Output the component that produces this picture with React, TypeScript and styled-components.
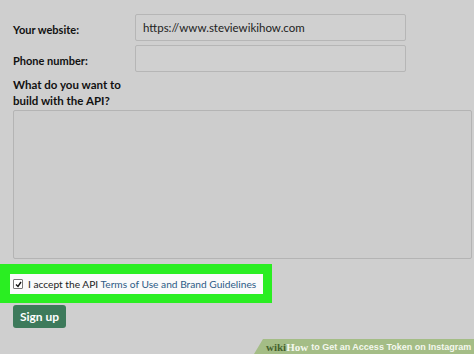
import React from 'react';
import styled, {createGlobalStyle} from "styled-components";

const GlobalStyle = createGlobalStyle`
    html, body {
        margin: 0;
        padding: 0;
        background: #cfcfcf;
        font-family: Lato, "Open Sans", sans-serif;
    }
`

const Page = styled.div`
    position: relative;
    width: 474px;
    height: 354px;
    overflow: hidden;
    background: #cfcfcf;
    padding-top: 14px;
    box-sizing: border-box;
`
const FieldRow = styled.div`
    display: grid;
    grid-template-columns: 122px 271px;
    align-items: center;
    padding-left: 13px;
    margin-bottom: 4px;
`
const Label = styled.label`
    font-size: 11px;
    font-weight: 700;
    color: #111;
    padding-top: 4px;
`
const Input = styled.div`
    height: 27px;
    box-sizing: border-box;
    border: 1.5px solid #b6b6b6;
    border-radius: 2px;
    background: #d0d0d0;
    font-size: 11.5px;
    color: #222;
    padding: 0 7px;
    display: flex;
    align-items: center;
`
const Question = styled.div`
    font-size: 11.5px;
    font-weight: 700;
    line-height: 16px;
    color: #111;
    padding: 1px 0 0 13px;
    width: 110px;
`
const TextArea = styled.div`
    margin: 1px 2px 0 13px;
    height: 149px;
    box-sizing: border-box;
    border: 1.5px solid #b4b4b4;
    border-radius: 2px;
    background: #cdcdcd;
`
const Highlight = styled.div`
    margin-top: 5px;
    width: 272px;
    box-sizing: border-box;
    background: #2aee22;
    padding: 10px 9px 9px 10px;
`
const AcceptBox = styled.div`
    background: #fafafa;
    height: 20px;
    display: flex;
    align-items: center;
    gap: 5px;
    padding-left: 3px;
    font-size: 10.2px;
    color: #222;
    white-space: nowrap;
`
const Check = styled.span`
    width: 8px;
    height: 8px;
    flex: none;
    border: 1px solid #777;
    border-radius: 1px;
    background: #fff;
    display: flex;
    align-items: center;
    justify-content: center;
`
const Link = styled.span`
    color: #2d5b86;
`
const Button = styled.div`
    margin: 2px 0 0 13px;
    width: 53px;
    height: 23px;
    border-radius: 3px;
    background: #3d7a5b;
    color: #fff;
    font-size: 12px;
    font-weight: 700;
    display: flex;
    align-items: center;
    justify-content: center;
`
const Watermark = styled.div`
    position: absolute;
    right: 0;
    bottom: 0;
    height: 15px;
    width: 220px;
    background: #a4bd86;
    clip-path: polygon(9px 0, 100% 0, 100% 100%, 0 100%);
    display: flex;
    align-items: center;
    padding-left: 12px;
    box-sizing: border-box;
    white-space: nowrap;
`
const Wiki = styled.span`
    font-family: "Liberation Serif", serif;
    font-weight: 700;
    font-size: 11px;
    color: #46622d;
`
const How = styled.span`
    font-family: "Liberation Serif", serif;
    font-weight: 700;
    font-size: 11px;
    color: #f4f8ee;
`
const Caption = styled.span`
    font-family: "Liberation Sans", sans-serif;
    font-weight: 700;
    font-size: 9px;
    color: #f4f8ee;
    margin-left: 3px;
`

export default function App() {
    return (
        <Page>
            <GlobalStyle/>
            <FieldRow>
                <Label>Your website:</Label>
                <Input>https://www.steviewikihow.com</Input>
            </FieldRow>
            <FieldRow>
                <Label>Phone number:</Label>
                <Input/>
            </FieldRow>
            <Question>What do you want to build with the API?</Question>
            <TextArea/>
            <Highlight>
                <AcceptBox>
                    <Check>
                        <svg width="7" height="7" viewBox="0 0 7 7">
                            <path d="M1 3.5 L3 5.5 L6 1" stroke="#111" strokeWidth="1.4" fill="none"/>
                        </svg>
                    </Check>
                    <span>I accept the API <Link>Terms of Use and Brand Guidelines</Link></span>
                </AcceptBox>
            </Highlight>
            <Button>Sign up</Button>
            <Watermark>
                <Wiki>wiki</Wiki><How>How</How>
                <Caption>to Get an Access Token on Instagram</Caption>
            </Watermark>
        </Page>
    );
}
